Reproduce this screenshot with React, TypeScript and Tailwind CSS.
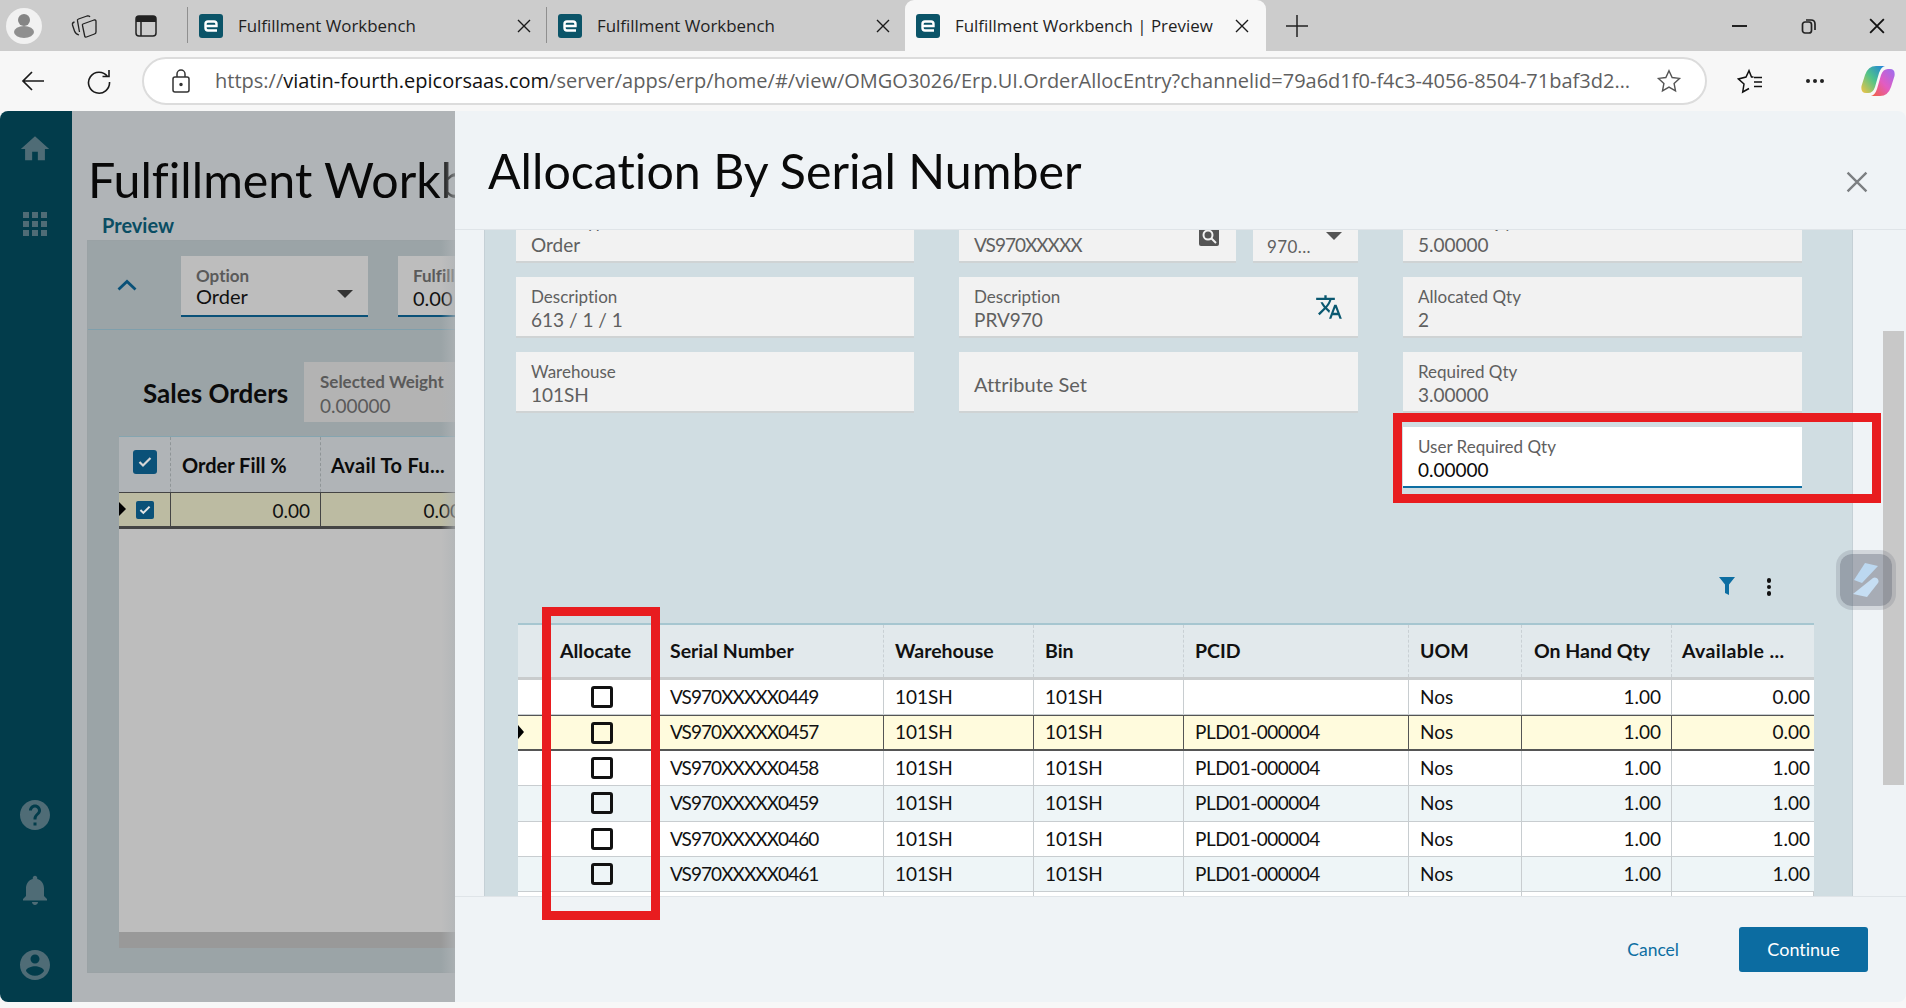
import React from "react";

const F = "font-['Lato',sans-serif]";

function Favicon() {
  return (
    <svg width="24" height="24" viewBox="0 0 24 24" className="shrink-0">
      <rect width="24" height="24" rx="3" fill="#0b5468" />
      <path d="M6.500 12h11V10c0-1.500-1-2.500-2.500-2.500H9C7.500 7.500 6.500 8.500 6.500 10v4c0 1.500 1 2.500 2.500 2.500h9" fill="none" stroke="#fff" strokeWidth="2.400" />
    </svg>
  );
}

function X({ size = 14, color = "#1a1a1a", w = 1.4 }: { size?: number; color?: string; w?: number }) {
  return (
    <svg width={size} height={size} viewBox="0 0 14 14" className="shrink-0">
      <path d="M1 1l12 12M13 1L1 13" stroke={color} strokeWidth={w} fill="none" />
    </svg>
  );
}

function Tab({ title, active }: { title: string; active?: boolean }) {
  return (
    <div className={"flex h-[51px] items-center " + (active ? "w-[361px] rounded-t-[9px] bg-[#f7f7f7] pl-[11px] pr-[17px]" : "w-[359px] border-l border-[#8f8f8f] bg-clip-content pl-[11px] pr-[15px] [border-image:linear-gradient(transparent_8px,#8f8f8f_8px,#8f8f8f_42px,transparent_42px)_1]")}>
      <Favicon />
      <span className="ml-[15px] flex-1 truncate font-['Open_Sans',sans-serif] text-[16.900px] text-[#1f1f1f]">{title}</span>
      <X />
    </div>
  );
}

function Field({ label, value, w = "w-[399px]", icon, big, valueCls = "" }: { label?: string; value: string; w?: string; icon?: React.ReactNode; big?: boolean; valueCls?: string }) {
  return (
    <div className={"relative h-[61px] shrink-0 border-b-2 border-[#cfd3d4] bg-[#f2f2f2] pl-[15px] " + w + " " + F}>
      {label && <div className="pt-[9px] text-[17px] leading-[22px] text-[#5f6060]">{label}</div>}
      <div className={(big ? "pt-[20px] text-[20px] leading-[24px]" : "text-[19px] leading-[24px]") + " text-[#5f6060] " + valueCls}>{value}</div>
      {icon}
    </div>
  );
}

const columns = ["w-[33px]", "w-[106px]", "w-[227px]", "w-[150px]", "w-[150px]", "w-[225px]", "w-[113px]", "w-[150px]", "w-[142px]"];
const rows = [
  ["VS970XXXXX0449", "", "1.00", "0.00", "bg-white"],
  ["VS970XXXXX0457", "PLD01-000004", "1.00", "0.00", "bg-[#fffbdd]"],
  ["VS970XXXXX0458", "PLD01-000004", "1.00", "1.00", "bg-white"],
  ["VS970XXXXX0459", "PLD01-000004", "1.00", "1.00", "bg-[#eef5f7]"],
  ["VS970XXXXX0460", "PLD01-000004", "1.00", "1.00", "bg-white"],
  ["VS970XXXXX0461", "PLD01-000004", "1.00", "1.00", "bg-[#eef5f7]"],
];

function HeaderCell({ cls, text, pad = "pl-[11px]" }: { cls: string; text?: string; pad?: string }) {
  return (
    <div className={"flex h-full items-center truncate border-r border-dashed border-[#c9d0d4] text-[19.500px] font-bold text-[#111] " + cls + " " + pad}>
      {text}
    </div>
  );
}

function Row({ r, index }: { r: string[]; index: number }) {
  const sel = index === 1;
  const line = sel ? "border-[#555]" : "border-[#c8cdd0]";
  const cell = "flex h-full items-center border-r text-[19px] text-[#111] " + line + " ";
  return (
    <div className={"relative flex h-[35.400px] border-b " + (sel ? "border-b-2 border-t border-[#555] " : "border-[#c8cdd0] ") + r[4]}>
      {sel && <div className="absolute left-0 top-[9px] h-0 w-0 border-y-[7px] border-l-[6px] border-y-transparent border-l-black" />}
      <div className={cell + columns[0]} />
      <div className={cell + columns[1] + " justify-center pr-[4px]"}>
        <div className="h-[22px] w-[22px] rounded-[3px] border-[3px] border-[#111]" />
      </div>
      <div className={cell + columns[2] + " pl-[13px] tracking-[-0.950px]"}>{r[0]}</div>
      <div className={cell + columns[3] + " pl-[11px]"}>101SH</div>
      <div className={cell + columns[4] + " pl-[11px]"}>101SH</div>
      <div className={cell + columns[5] + " pl-[11px] tracking-[-0.500px]"}>{r[1]}</div>
      <div className={cell + columns[6] + " pl-[11px]"}>Nos</div>
      <div className={cell + columns[7] + " justify-end pr-[10px]"}>{r[2]}</div>
      <div className={"flex h-full items-center justify-end pr-[4px] text-[19px] text-[#111] " + columns[8]}>{r[3]}</div>
    </div>
  );
}

function Icon({ d, size, color, className }: { d: string; size: number; color: string; className?: string }) {
  return (
    <svg width={size} height={size} viewBox="0 0 24 24" className={className}>
      <path d={d} fill={color} />
    </svg>
  );
}

export default function App() {
  return (
    <div className={"flex h-[1008px] w-[1906px] flex-col overflow-hidden bg-[#f7f7f7] [font-variant-ligatures:none] " + F}>
      {/* browser tab strip */}
      <div className="flex h-[51px] shrink-0 items-center bg-[#cccccc]">
        <div className="ml-[6px] flex h-[36px] w-[36px] items-center justify-center rounded-full bg-[#f1f1f1]">
          <svg width="26" height="30" viewBox="0 0 26 30"><circle cx="13" cy="9" r="6" fill="#858585" /><ellipse cx="13" cy="21" rx="10" ry="6" fill="#8f8f8f" /></svg>
        </div>
        <svg width="26" height="26" viewBox="0 0 26 26" className="ml-[29px]" fill="none" stroke="#222" strokeWidth="1.300">
          <path d="M12 11L23 7Q25 6.500 25 8.500V19Q25 20.500 23.500 21L15.500 24Q14 24.500 13.700 23L11.500 12.500Q11 11.500 12 11Z" />
          <path d="M8.500 19L6.500 8Q6 6.500 7.500 6L16 3Q18 2.500 19 4" />
          <path d="M3.500 9Q1 9.500 1.500 12L3.500 18Q4.500 21 8 22" />
        </svg>
        <svg width="24" height="24" viewBox="0 0 24 24" className="ml-[37px]">
          <rect x="2" y="2" width="20" height="20" rx="3" fill="none" stroke="#222" strokeWidth="1.500" />
          <path d="M2 5a3 3 0 013-3h14a3 3 0 013 3v3H2z" fill="#222" />
          <path d="M7 8v14" stroke="#222" strokeWidth="1.500" />
        </svg>
        <div className="ml-[29px] flex items-center">
          <Tab title="Fulfillment Workbench" />
          <Tab title="Fulfillment Workbench" />
        </div>
        <Tab title="Fulfillment Workbench | Preview" active />
        <svg width="24" height="24" viewBox="0 0 24 24" className="ml-[19px]"><path d="M12 1v22M1 12h22" stroke="#222" strokeWidth="1.500" /></svg>
        <div className="flex-1" />
        <div className="h-[2px] w-[15px] bg-[#222]" />
        <svg width="16" height="18" viewBox="0 0 16 18" className="ml-[54px]" fill="none" stroke="#222" strokeWidth="1.700"><rect x="1.500" y="5" width="9" height="11" rx="2.500" /><path d="M5 3h5c2.500 0 4 1.500 4 4v6" /></svg>
        <div className="ml-[52px] mr-[21px]"><X size={16} color="#111" w={1.6} /></div>
      </div>

      {/* address bar */}
      <div className="flex h-[60px] shrink-0 items-center bg-[#f7f7f7]">
        <svg width="24" height="24" viewBox="0 0 24 24" className="ml-[21px]" fill="none" stroke="#1a1a1a" strokeWidth="1.700"><path d="M23 12H2M11 3l-9 9 9 9" /></svg>
        <svg width="26" height="28" viewBox="0 0 26 28" className="ml-[41px]" fill="none" stroke="#1a1a1a" strokeWidth="1.600"><path d="M23.500 15A10.500 10.500 0 1 1 21.500 9.500M23 3V9.500H16.500" /></svg>
        <div className="ml-[30px] flex h-[48px] w-[1565px] items-center rounded-full border-2 border-[#dcdcdc] bg-white">
          <svg width="20" height="26" viewBox="0 0 20 26" className="ml-[27px]" fill="none" stroke="#333" strokeWidth="1.500"><rect x="2" y="9" width="16" height="15" rx="2" /><path d="M6 9V6a4 4 0 018 0v3" /><circle cx="10" cy="16.500" r="1" fill="#333" /></svg>
          <div className="ml-[24px] w-[1415px] truncate font-['Open_Sans',sans-serif] text-[20px] text-[#5f5f5f]">
            https://<span className="text-[#111]">viatin-fourth.epicorsaas.com</span>/server/apps/erp/home/#/view/OMGO3026/Erp.UI.OrderAllocEntry?channelid=79a6d1f0-f4c3-4056-8504-71baf3d2...
          </div>
          <svg width="26" height="26" viewBox="0 0 24 24" className="ml-[26px]" fill="none" stroke="#555" strokeWidth="1.300"><path d="M12 2.500l2.900 6.300 6.800.8-5 4.700 1.300 6.800-6-3.400-6 3.400 1.300-6.800-5-4.700 6.800-.8z" /></svg>
        </div>
        <svg width="28" height="26" viewBox="0 0 28 26" className="ml-[30px]" fill="none" stroke="#111" strokeWidth="1.500"><path d="M16.500 9H14.500L12 2.700 9 9 1.500 11 7 16 5.700 24 12 20.500M17 9.500H25M17 14H25M17 18.500H25" /></svg>
        <div className="ml-[41px] flex gap-[3px]">
          <div className="h-[4px] w-[4px] rounded-full bg-[#222]" />
          <div className="h-[4px] w-[4px] rounded-full bg-[#222]" />
          <div className="h-[4px] w-[4px] rounded-full bg-[#222]" />
        </div>
        <svg width="34" height="32" viewBox="0 0 34 32" className="ml-[37px]">
          <defs>
            <linearGradient id="c1" x1="0" y1="1" x2="1" y2="0"><stop offset="0" stopColor="#f6c342" /><stop offset=".5" stopColor="#4fc38a" /><stop offset="1" stopColor="#1f7fe0" /></linearGradient>
            <linearGradient id="c2" x1="0" y1="1" x2="1" y2="0"><stop offset="0" stopColor="#f2603c" /><stop offset=".5" stopColor="#e25cc2" /><stop offset="1" stopColor="#9a6ef0" /></linearGradient>
          </defs>
          <path d="M15 1H24Q20 2 18 8L14 22Q12 28 7 28H5Q-.5 28 .5 21L4 10Q7 1 15 1Z" fill="url(#c1)" />
          <path d="M19 31H10Q14 30 16 24L20 10Q22 4 27 4H29Q34.500 4 33.500 11L30 22Q27 31 19 31Z" fill="url(#c2)" />
        </svg>
      </div>

      {/* application */}
      <div className="flex h-[891px] shrink-0 overflow-hidden rounded-[8px]">
        {/* rail */}
        <div className="flex w-[72px] shrink-0 flex-col items-center bg-[#023c4b] pr-[2px] pt-[21px] pb-[19px]">
          <Icon size={34} color="#4f6c76" d="M10 20v-6h4v6h5v-8h3L12 3 2 12h3v8z" />
          <svg width="26" height="26" viewBox="0 0 26 26" className="mt-[45px]" fill="#4f6c76">
            <path d="M1 1h6v6H1zM10 1h6v6h-6zM19 1h6v6h-6zM1 10h6v6H1zM10 10h6v6h-6zM19 10h6v6h-6zM1 19h6v6H1zM10 19h6v6h-6zM19 19h6v6h-6z" />
          </svg>
          <div className="flex-1" />
          <Icon size={36} color="#4f6c76" d="M12 2C6.480 2 2 6.480 2 12s4.480 10 10 10 10-4.480 10-10S17.520 2 12 2zm1 17h-2v-2h2v2zm2.070-7.750l-.9.920C13.450 12.900 13 13.500 13 15h-2v-.5c0-1.100.450-2.100 1.170-2.830l1.240-1.260c.370-.360.590-.860.590-1.410 0-1.100-.9-2-2-2s-2 .9-2 2H8c0-2.210 1.790-4 4-4s4 1.790 4 4c0 .880-.360 1.680-.930 2.250z" />
          <Icon size={36} color="#4f6c76" className="mt-[39px]" d="M12 22c1.100 0 2-.9 2-2h-4c0 1.100.890 2 2 2zm6-6v-5c0-3.070-1.640-5.640-4.500-6.320V4c0-.830-.670-1.500-1.500-1.500s-1.500.670-1.500 1.500v.680C7.630 5.360 6 7.920 6 11v5l-2 2v1h16v-1l-2-2z" />
          <Icon size={36} color="#4f6c76" className="mt-[39px]" d="M12 2C6.480 2 2 6.480 2 12s4.480 10 10 10 10-4.480 10-10S17.520 2 12 2zm0 3c1.660 0 3 1.340 3 3s-1.340 3-3 3-3-1.340-3-3 1.340-3 3-3zm0 14.200c-2.500 0-4.710-1.280-6-3.220.030-1.990 4-3.080 6-3.080 1.990 0 5.970 1.090 6 3.080-1.290 1.940-3.500 3.220-6 3.220z" />
        </div>

        {/* dimmed page behind the dialog */}
        <div className="relative w-[383px] shrink-0 overflow-hidden bg-[#b0b4b7]">
          <div className="whitespace-nowrap pl-[16px] pt-[39px] text-[48.300px] leading-[58px] text-[#080808]">Fulfillment Workbench</div>
          <div className="pl-[30px] pt-[5px] text-[20px] font-bold leading-[24px] text-[#0a4d63]">Preview</div>
          <div className="ml-[15px] mt-[3px] h-[733px] w-[500px] border border-[#9aa2a5] bg-[#9ba4a7]">
            <div className="flex h-[89px] items-start border-b border-[#7f9fac] pt-[15px]">
              <svg width="20" height="12" viewBox="0 0 20 12" className="ml-[29px] mt-[23px]" fill="none" stroke="#0a5178" strokeWidth="2.800"><path d="M1.500 10.500L10 2.500l8.500 8" /></svg>
              <div className="relative ml-[44px] h-[61px] w-[187px] border-b-2 border-[#0a5178] bg-[#bdbdbd] pl-[15px]">
                <div className="pt-[9px] text-[17px] font-bold leading-[22px] text-[#5a5a5a]">Option</div>
                <div className="text-[20px] leading-[19px] text-[#111]">Order</div>
                <div className="absolute right-[15px] top-[34px] h-0 w-0 border-x-[8px] border-t-[8px] border-x-transparent border-t-[#333]" />
              </div>
              <div className="ml-[30px] h-[61px] w-[187px] border-b-2 border-[#0a5178] bg-[#bdbdbd] pl-[15px]">
                <div className="pt-[9px] text-[17px] font-bold leading-[22px] text-[#5a5a5a]">Fulfill</div>
                <div className="pt-[1px] text-[20px] leading-[20px] text-[#111]">0.00</div>
              </div>
            </div>
            <div className="flex h-[106px] items-start pt-[32px]">
              <div className="ml-[55px] w-[161px] pt-[15px] text-[26px] font-bold leading-[32px] text-[#0b0b0b]">Sales Orders</div>
              <div className="h-[60px] w-[200px] bg-[#b3b3b3] pl-[16px]">
                <div className="pt-[9px] text-[17px] font-bold leading-[22px] text-[#5a5a5a]">Selected Weight</div>
                <div className="pt-[1px] text-[19px] leading-[24px] text-[#5a5a5a]">0.00000</div>
              </div>
            </div>
            <div className="ml-[31px] h-[512px] bg-[#bdbdbd]">
              <div className="flex h-[56px] border-t border-[#85a5b0] bg-[#b0b4b7] text-[20px] font-bold text-[#0b0b0b]">
                <div className="flex w-[52px] items-center justify-center border-r border-dashed border-[#8f9597] pb-[5px]">
                  <div className="flex h-[24px] w-[24px] items-center justify-center rounded-[3px] bg-[#0a5178]">
                    <svg width="14" height="12" viewBox="0 0 14 12" fill="none" stroke="#d5d5d5" strokeWidth="2.200"><path d="M1.500 6l3.500 3.500 7.500-7.500" /></svg>
                  </div>
                </div>
                <div className="flex w-[150px] items-center border-r border-dashed border-[#8f9597] pl-[11px]">Order Fill %</div>
                <div className="flex w-[200px] items-center pl-[10px] tracking-[0.300px]">Avail To Fu...</div>
              </div>
              <div className="flex h-[37px] border-y-[1px] border-b-[3px] border-[#444] bg-[#bcbba2] text-[19px] text-[#111]">
                <div className="relative flex w-[52px] items-center justify-center border-r border-[#444] pl-[1px]">
                  <div className="absolute left-0 top-[9px] h-0 w-0 border-y-[7px] border-l-[7px] border-y-transparent border-l-black" />
                  <div className="flex h-[18px] w-[18px] items-center justify-center rounded-[2px] bg-[#0a5178]">
                    <svg width="12" height="10" viewBox="0 0 14 12" fill="none" stroke="#e5e5e5" strokeWidth="2.400"><path d="M1.500 6l3.500 3.500 7.500-7.500" /></svg>
                  </div>
                </div>
                <div className="flex w-[150px] items-center justify-end border-r border-[#444] pr-[10px] pt-[3px]">0.00</div>
                <div className="flex w-[150px] items-center justify-end pr-[10px] pt-[3px]">0.00</div>
              </div>
              <div className="h-[403px]" />
              <div className="h-[16px] bg-[#999999]" />
            </div>
          </div>
          <div className="absolute inset-y-0 right-0 w-[14px] bg-gradient-to-r from-transparent to-[#b0b4b7]/70" />
        </div>

        {/* dialog */}
        <div className="relative flex min-w-0 flex-1 flex-col bg-[#eff3f6]">
          <div className="flex h-[119px] shrink-0 items-start border-b border-[#dfe4e8]">
            <div className="pl-[33px] pt-[29px] text-[48.300px] leading-[60px] text-[#0a0a0a]">Allocation By Serial Number</div>
            <div className="ml-auto mr-[38px] mt-[60px]"><X size={22} color="#7c7f82" w={1.500} /></div>
          </div>
          <div className="flex min-h-0 flex-1">
            <div className="w-[30px] shrink-0 border-r border-[#c5d0d6]" />
            <div className="w-[1368px] shrink-0 overflow-hidden border-r border-[#c5d0d6] bg-[#d0dde2]">
              <div className="-mt-[28px] flex flex-col gap-[14px] pl-[31px]">
                <div className="flex gap-[45px]">
                  <Field label="Order Type" value="Order" w="w-[398px]" />
                  <div className="flex gap-[17px]">
                    <Field label="Part" value="VS970XXXXX" w="w-[277px]" valueCls="tracking-[-1px]" icon={
                      <svg width="22" height="22" viewBox="0 0 22 22" className="absolute right-[16px] top-[23px]">
                        <rect x="1" y="1" width="20" height="20" rx="2" fill="#555" />
                        <circle cx="10" cy="10" r="4.500" fill="none" stroke="#f2f2f2" strokeWidth="2" />
                        <path d="M13 13l5 5" stroke="#f2f2f2" strokeWidth="2" />
                      </svg>
                    } />
                    <div className="relative h-[61px] w-[105px] border-b-2 border-[#cfd3d4] bg-[#f2f2f2] pl-[14px] pt-[35px] text-[17px] leading-[20px] tracking-[0.400px] text-[#5f6060]">
                      970...
                      <div className="absolute right-[16px] top-[30px] h-0 w-0 border-x-[8px] border-t-[8px] border-x-transparent border-t-[#555]" />
                    </div>
                  </div>
                  <Field label="Ordered Qty" value="5.00000" />
                </div>
                <div className="flex gap-[45px]">
                  <Field label="Description" value="613 / 1 / 1" w="w-[398px]" />
                  <Field label="Description" value="PRV970" icon={
                    <Icon size={28} color="#0a5870" className="absolute right-[15px] top-[16px]" d="M12.870 15.070l-2.540-2.510.030-.030c1.740-1.940 2.980-4.170 3.710-6.530H17V4h-7V2H8v2H1v1.990h11.170C11.500 7.920 10.440 9.750 9 11.350 8.070 10.320 7.300 9.190 6.690 8h-2c.730 1.630 1.730 3.170 2.980 4.560l-5.090 5.020L4 19l5-5 3.110 3.110.760-2.040zM18.500 10h-2L12 22h2l1.120-3h4.750L21 22h2l-4.500-12zm-2.620 7l1.620-4.330L19.120 17h-3.240z" />
                  } />
                  <Field label="Allocated Qty" value="2" />
                </div>
                <div className="flex gap-[45px]">
                  <Field label="Warehouse" value="101SH" w="w-[398px]" />
                  <Field value="Attribute Set" big />
                  <Field label="Required Qty" value="3.00000" />
                </div>
                <div className="flex">
                  <div className="ml-[887px] h-[61px] w-[399px] border-b-2 border-[#0d6ea2] bg-white pl-[15px]">
                    <div className="pt-[9px] text-[17px] leading-[22px] text-[#5f6060]">User Required Qty</div>
                    <div className="text-[19px] leading-[24px] text-[#0a0a0a]">0.00000</div>
                  </div>
                </div>
              </div>
              <div className="flex h-[135px] items-start justify-end pl-[33px] pr-[81px] pt-[89px]">
                <svg width="16" height="18" viewBox="0 0 16 18"><path d="M0 0h16l-6 7.500V18l-4-2V7.500z" fill="#0d6ea2" /></svg>
                <div className="ml-[32px] flex flex-col gap-[2px] pt-[1px]">
                  <div className="h-[4.500px] w-[4.500px] rounded-full bg-[#111]" />
                  <div className="h-[4.500px] w-[4.500px] rounded-full bg-[#111]" />
                  <div className="h-[4.500px] w-[4.500px] rounded-full bg-[#111]" />
                </div>
              </div>
              <div className="ml-[33px] w-[1296px]">
                <div className="flex h-[57px] border-b-[3px] border-t-2 border-b-[#c9cccd] border-t-[#a6c6d0] bg-[#e2e9ec]">
                  <HeaderCell cls={columns[0]} />
                  <HeaderCell cls={columns[1]} text="Allocate" pad="pl-[9px]" />
                  <HeaderCell cls={columns[2]} text="Serial Number" pad="pl-[13px]" />
                  <HeaderCell cls={columns[3]} text="Warehouse" />
                  <HeaderCell cls={columns[4]} text="Bin" />
                  <HeaderCell cls={columns[5]} text="PCID" />
                  <HeaderCell cls={columns[6]} text="UOM" />
                  <HeaderCell cls={columns[7]} text="On Hand Qty" pad="pl-[12px]" />
                  <div className={"flex h-full items-center truncate pl-[10px] text-[19.500px] font-bold tracking-[0.400px] text-[#111] " + columns[8]}>Available ...</div>
                </div>
                {rows.map((r, i) => <Row key={r[0]} r={r} index={i} />)}
                <div className="flex h-[6px] bg-white">
                  {columns.map((c, i) => <div key={i} className={"h-full border-r border-[#c8cdd0] " + c} />)}
                </div>
              </div>
            </div>
            <div className="min-w-0 flex-1 pl-[30px] pt-[101px]">
              <div className="h-[454px] w-[21px] bg-[#c8c8c8]" />
            </div>
          </div>
          <div className="flex h-[106px] shrink-0 items-start justify-end border-t border-[#dfe4e8] pr-[38px] pt-[30px]">
            <div className="mr-[60px] pt-[11px] text-[17.500px] leading-[24px] text-[#0d6ea2]">Cancel</div>
            <div className="flex h-[45px] w-[129px] items-center justify-center rounded-[3px] bg-[#0c6ca1] text-[18px] text-white">Continue</div>
          </div>

          {/* overlays */}
          <div className="pointer-events-none absolute left-[938px] top-[302px] h-[90px] w-[488px] border-[9px] border-[#e81c1f]" />
          <div className="pointer-events-none absolute left-[87px] top-[496px] h-[313px] w-[118px] border-[9px] border-[#e81c1f]" />
          <div className="absolute left-[1381px] top-[439px] h-[60px] w-[60px] rounded-[16px] border-[4px] border-[#5f6673]/20 bg-[#5f6673]/50 bg-clip-padding">
            <svg width="60" height="60" viewBox="0 0 60 60" className="absolute -left-[4px] -top-[4px]">
              <path d="M29 13L42 16 26 33 18 30z" fill="#bcd8f0" />
              <path d="M37 28C40 26 44 30 42 33L31 47 17 44z" fill="#c6def3" />
            </svg>
          </div>
        </div>
      </div>
    </div>
  );
}
